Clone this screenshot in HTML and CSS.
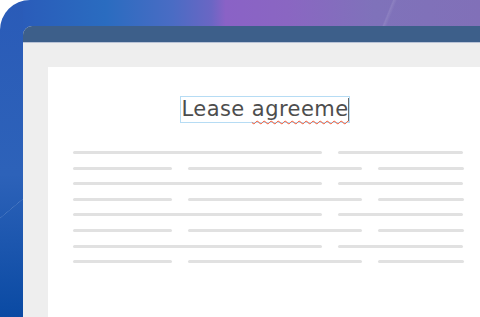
FILE: index.html
```html
<!DOCTYPE html>
<html>
<head>
<meta charset="utf-8">
<link rel="stylesheet" href="styles.css">
</head>
<body>
<div class="frame">
  <div class="window">
    <div class="titlebar"></div>
    <div class="content">
      <div class="page">
        <div class="title-row">
          <div class="title-box">Lease <span class="misspelled">agreeme</span><span class="caret"></span></div>
        </div>
        <div class="lines">
          <div class="row odd"><span class="seg s1"></span><span class="seg s2"></span></div>
          <div class="row even"><span class="seg e1"></span><span class="seg e2"></span><span class="seg e3"></span></div>
          <div class="row odd"><span class="seg s1"></span><span class="seg s2"></span></div>
          <div class="row even"><span class="seg e1"></span><span class="seg e2"></span><span class="seg e3"></span></div>
          <div class="row odd"><span class="seg s1"></span><span class="seg s2"></span></div>
          <div class="row even"><span class="seg e1"></span><span class="seg e2"></span><span class="seg e3"></span></div>
          <div class="row odd"><span class="seg s1"></span><span class="seg s2"></span></div>
          <div class="row even"><span class="seg e1"></span><span class="seg e2"></span><span class="seg e3"></span></div>
        </div>
      </div>
    </div>
  </div>
</div>
</body>
</html>
```

FILE: styles.css
```css
html, body {
  margin: 0;
  padding: 0;
  width: 480px;
  height: 317px;
  overflow: hidden;
  background: #ffffff;
}

.frame {
  box-sizing: border-box;
  width: 480px;
  height: 317px;
  padding: 26px 0 0 23px;
  border-top-left-radius: 30px;
  background:
    linear-gradient(140deg, transparent 0 68%, rgba(255,255,255,0.16) 68.5%, transparent 69.5%) 0 150px / 23px 80px no-repeat,
    linear-gradient(to bottom, #2a5bb8 0%, #2d62b9 55%, #0a4aa3 100%) 0 0 / 23px 100% no-repeat,
    linear-gradient(112deg, transparent 0 80%, rgba(255,255,255,0.10) 80.3%, transparent 81%) 0 0 / 100% 26px no-repeat,
    linear-gradient(to right, #2a58b8 0%, #2a6cc0 22%, #4a6cc4 36%, #6a66c4 44%, #8a62c6 47%, #8a66c2 60%, #7f72ba 78%, #8170b8 100%);
}

.window {
  height: 100%;
  display: flex;
  flex-direction: column;
  border-top-left-radius: 9px;
  overflow: hidden;
  background: #eeeeee;
}

.titlebar {
  height: 16px;
  flex: none;
  background: #3d5f8a;
  border-bottom: 1px solid #b9c3d6;
}

.content {
  flex: 1;
  display: flex;
  padding: 24px 0 0 25px;
  border-left: 1px solid #c9cde6;
  margin-left: -1px;
}

.page {
  flex: 1;
  background: #ffffff;
  display: flex;
  flex-direction: column;
}

.title-row {
  display: flex;
  justify-content: center;
  padding-top: 29px;
}

.title-box {
  box-sizing: border-box;
  width: 170px;
  height: 27px;
  border: 1px solid #b6dcf4;
  font-family: "DejaVu Sans", sans-serif;
  font-size: 21px;
  line-height: 25px;
  letter-spacing: 0.45px;
  color: #4d4d4d;
  padding-left: 1px;
  white-space: nowrap;
  margin-left: 1px;
}

.misspelled {
  text-decoration-line: underline;
  text-decoration-style: wavy;
  text-decoration-color: #f2512b;
  text-decoration-thickness: 1.4px;
  text-underline-offset: 4px;
  text-decoration-skip-ink: none;
}

.caret {
  display: inline-block;
  width: 1px;
  height: 23px;
  background: #6a6a6a;
  margin-left: -0.45px;
  vertical-align: -5px;
}

.lines {
  display: flex;
  flex-direction: column;
  gap: 12.6px;
  padding: 28px 0 0 25px;
}

.row {
  display: flex;
  gap: 16px;
  height: 3px;
}

.seg {
  display: block;
  height: 3px;
  border-radius: 2px;
  background: #e1e1e1;
}

.s1 { width: 249px; }
.s2 { width: 125px; }
.e1 { width: 99px; }
.e2 { width: 174px; }
.e3 { width: 86px; }
```
